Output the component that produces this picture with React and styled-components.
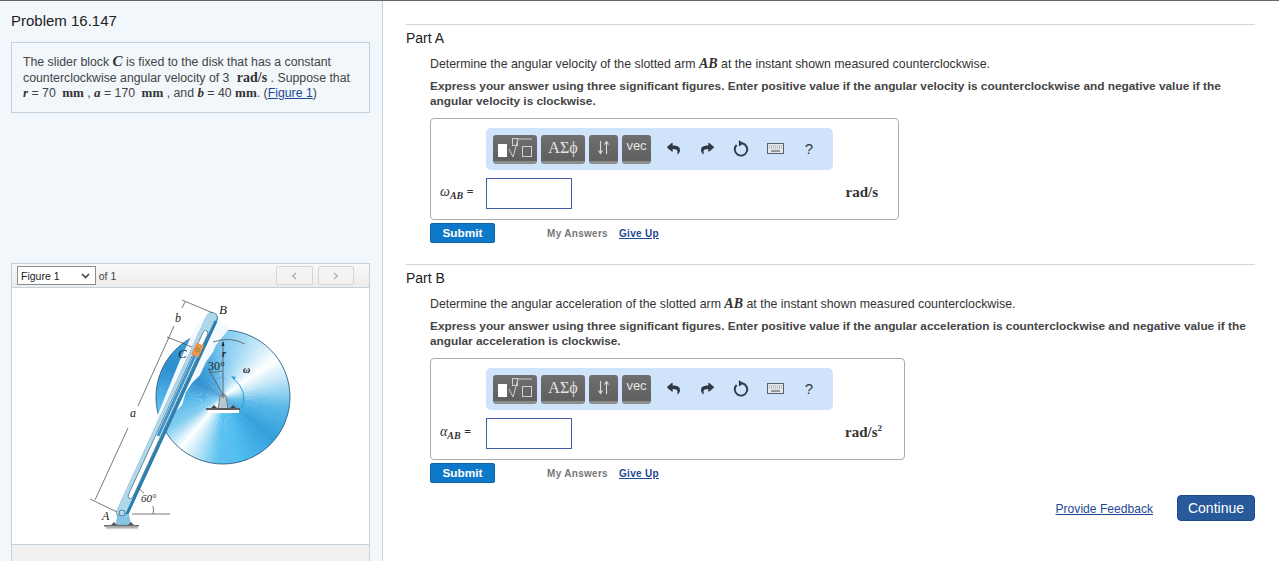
import React from 'react';
import styled, { createGlobalStyle } from 'styled-components';
import { FaReply, FaShare } from 'react-icons/fa';

const GlobalStyle = createGlobalStyle`
  html, body {
    margin: 0;
    padding: 0;
    background: #fff;
    overflow: hidden;
  }
  body {
    font-family: "Liberation Sans", Arial, sans-serif;
    color: #333;
  }
`;

const Page = styled.div`
  display: flex;
  width: 1279px;
  height: 561px;
  border-top: 1px solid #666;
  box-sizing: border-box;
  overflow: hidden;
`;

const Sidebar = styled.aside`
  width: 383px;
  flex: none;
  box-sizing: border-box;
  background: #f2f7fc;
  border-right: 1px solid #c3d1dd;
  padding: 11px 12px 0 11px;
`;

const Title = styled.h1`
  margin: 0 0 13px;
  font-size: 15px;
  line-height: 17px;
  font-weight: 400;
  color: #222;
`;

const Intro = styled.div`
  height: 71px;
  box-sizing: border-box;
  border: 1px solid #c3d1dd;
  padding: 11px 11px 0;
  font-size: 12.3px;
  line-height: 15.5px;
  color: #444;
  white-space: nowrap;
`;

const Formula = styled.span`
  font-family: "Liberation Serif", serif;
  font-weight: 700;
  font-size: ${(p) => p.$size || 14}px;
  font-style: ${(p) => (p.$italic ? 'italic' : 'normal')};
  line-height: 1;
  color: #333;
  margin: ${(p) => p.$margin || '0'};
`;

const TextLink = styled.a`
  color: #1d4a94;
  text-decoration: underline;
`;

const FigurePanel = styled.section`
  margin-top: 150px;
  border: 1px solid #c3d1dd;
  background: #fff;
`;

const FigureBar = styled.div`
  display: flex;
  align-items: center;
  height: 23px;
  padding: 0 15px 0 5px;
  background: linear-gradient(#f9f9f9, #ececec);
  border-bottom: 1px solid #c3d1dd;
  font-size: 10.5px;
  color: #444;
  white-space: nowrap;
`;

const FigureSelect = styled.div`
  display: flex;
  align-items: center;
  justify-content: space-between;
  width: 80px;
  height: 19px;
  box-sizing: border-box;
  margin-right: 3px;
  padding: 0 5px 0 3px;
  background: #fff;
  border: 1px solid #8d8d8d;
  color: #222;
`;

const PagerButton = styled.div`
  display: flex;
  align-items: center;
  justify-content: center;
  width: 35px;
  height: 17px;
  margin-left: ${(p) => p.$margin}px;
  border: 1px solid #d5d5d5;
  border-radius: 2px;
  background: #f3f3f3;
`;

const FigureBody = styled.div`
  height: 256px;
`;

const FigureFoot = styled.div`
  height: 20px;
  border-top: 1px solid #c3d1dd;
  background: #f1f1f1;
`;

const Main = styled.main`
  flex: 1;
  min-width: 0;
  box-sizing: border-box;
  padding: 23px 24px 0 23px;
`;

const Part = styled.section`
  border-top: 1px solid #d6d6d6;
  padding-top: 6px;
  height: 240px;
  box-sizing: border-box;
`;

const PartTitle = styled.h2`
  margin: 0 0 11px;
  font-size: 14px;
  line-height: 15px;
  font-weight: 400;
  color: #222;
`;

const PartBody = styled.div`
  padding-left: 24px;
`;

const Question = styled.p`
  margin: 0 0 7px;
  font-size: 12.35px;
  line-height: 15px;
  color: #333;
`;

const Instruction = styled.p`
  margin: 0 0 9px;
  font-size: 11.83px;
  line-height: 15px;
  font-weight: 700;
  color: #444;
`;

const AnswerBox = styled.div`
  width: ${(p) => p.$width}px;
  height: 102px;
  box-sizing: border-box;
  border: 1px solid #aaa;
  border-radius: 4px;
  padding: 9px ${(p) => p.$inset}px 0 9px;
`;

const Toolbar = styled.div`
  display: flex;
  align-items: center;
  width: 347px;
  height: 42px;
  box-sizing: border-box;
  margin-left: 46px;
  padding: 0 7px;
  background: #cfe4fb;
  border-radius: 5px;
`;

const ToolGroup = styled.div`
  display: flex;
  gap: 4px;
  margin-right: ${(p) => p.$margin || 0}px;
`;

const ToolButton = styled.div`
  display: flex;
  align-items: ${(p) => (p.$top ? 'flex-start' : 'center')};
  justify-content: center;
  width: ${(p) => p.$width}px;
  height: 29px;
  box-sizing: border-box;
  padding-top: ${(p) => (p.$top ? 3 : 0)}px;
  border-radius: 3px;
  background: linear-gradient(#6f6f6f, #5f5f5f);
  border-bottom: 3px solid #8d8d8d;
  color: #e4e4e4;
  font-size: 13px;
`;

const GreekLabel = styled.span`
  font-family: "Liberation Serif", serif;
  font-size: 16px;
`;

const ActionIcon = styled.div`
  display: flex;
  align-items: center;
  justify-content: center;
  width: 34px;
  padding-bottom: 2px;
  color: #2f3a44;
  font-size: 15px;
`;

const InputRow = styled.div`
  display: flex;
  align-items: center;
  height: 31px;
  margin-top: 8px;
`;

const InputLabel = styled.label`
  width: 46px;
  padding-bottom: 2px;
  font-family: "Liberation Serif", serif;
  font-style: italic;
  font-size: 14px;
  color: #333;
  white-space: nowrap;
`;

const SubLabel = styled.sub`
  font-size: 10px;
  font-weight: 700;
  vertical-align: -3px;
`;

const AnswerInput = styled.div`
  width: 86px;
  height: 31px;
  box-sizing: border-box;
  border: 1px solid #3f5fa8;
  background: #fff;
`;

const Unit = styled.span`
  margin-left: auto;
  padding-bottom: 2px;
  font-family: "Liberation Serif", serif;
  font-weight: 700;
  font-size: 15px;
  color: #333;
`;

const UnitPower = styled.sup`
  font-size: 9px;
  line-height: 0;
`;

const ActionRow = styled.div`
  display: flex;
  align-items: center;
  margin-top: 3px;
`;

const SubmitButton = styled.button`
  width: 65px;
  height: 20px;
  padding: 0;
  border: 1px solid #0e65a8;
  border-radius: 2px;
  background: #0f79c9;
  color: #fff;
  font-family: inherit;
  font-size: 11.8px;
  font-weight: 700;
`;

const MyAnswers = styled.span`
  margin-left: 52px;
  font-size: 10px;
  font-weight: 700;
  letter-spacing: 0.3px;
  color: #777;
`;

const GiveUp = styled.a`
  margin-left: 11px;
  font-size: 10px;
  font-weight: 700;
  letter-spacing: 0.3px;
  color: #1d4a94;
  text-decoration: underline;
`;

const Footer = styled.div`
  display: flex;
  align-items: center;
  justify-content: flex-end;
  margin-top: -9px;
`;

const Feedback = styled.a`
  margin: 2px 24px 0 0;
  font-size: 12.1px;
  color: #1d4a94;
  text-decoration: underline;
`;

const ContinueButton = styled.button`
  width: 78px;
  height: 26px;
  padding: 0;
  border: 1px solid #1f4c86;
  border-radius: 4px;
  background: #28599b;
  color: #fff;
  font-family: inherit;
  font-size: 14px;
`;

const DiagramText = styled.text`
  font-family: "Liberation Serif", serif;
  font-style: ${(p) => (p.$plain ? 'normal' : 'italic')};
  font-weight: ${(p) => (p.$bold ? 700 : 400)};
  font-size: ${(p) => p.$size || 12}px;
  fill: #222;
`;

// stops of the disk shading, clockwise from the top
const diskStops = [
  [0, [125, 200, 240]],
  [25, [175, 222, 246]],
  [55, [255, 255, 255]],
  [75, [190, 228, 247]],
  [100, [90, 185, 232]],
  [130, [50, 160, 220]],
  [165, [80, 190, 240]],
  [185, [95, 195, 240]],
  [205, [190, 230, 248]],
  [220, [255, 255, 255]],
  [240, [130, 205, 240]],
  [265, [85, 185, 235]],
  [300, [45, 140, 205]],
  [330, [60, 160, 220]],
  [360, [125, 200, 240]]
];

const shadeAt = (deg) => {
  let i = 0;
  while (i < diskStops.length - 2 && diskStops[i + 1][0] <= deg) i += 1;
  const [a, ca] = diskStops[i];
  const [b, cb] = diskStops[i + 1];
  const t = (deg - a) / (b - a);
  const c = ca.map((v, k) => Math.round(v + (cb[k] - v) * t));
  return `rgb(${c[0]},${c[1]},${c[2]})`;
};

const CX = 223;
const CY = 397;
const R = 67;

const wedges = [...Array(120).keys()].map((i) => {
  const from = ((i * 3 - 0.3 - 90) * Math.PI) / 180;
  const to = (((i + 1) * 3 + 0.3 - 90) * Math.PI) / 180;
  const x1 = CX + R * Math.cos(from);
  const y1 = CY + R * Math.sin(from);
  const x2 = CX + R * Math.cos(to);
  const y2 = CY + R * Math.sin(to);
  return {
    d: `M${CX} ${CY}L${x1.toFixed(2)} ${y1.toFixed(2)}A${R} ${R} 0 0 1 ${x2.toFixed(2)} ${y2.toFixed(2)}Z`,
    fill: shadeAt(i * 3 + 1.5)
  };
});

const SliderDiagram = () => (
  <svg width="357" height="256" viewBox="12 288 357 256">
    <defs>
      <filter id="soft" x="-20%" y="-20%" width="140%" height="140%">
        <feGaussianBlur stdDeviation="0.5" />
      </filter>
      <linearGradient id="fade" x1="0" y1="0" x2="0" y2="1">
        <stop offset="0" stopColor="#9a9a9a" />
        <stop offset="1" stopColor="#f2f2f2" />
      </linearGradient>
    </defs>

    <g filter="url(#soft)">
      {wedges.map((w) => (
        <path key={w.d} d={w.d} fill={w.fill} />
      ))}
    </g>
    <circle cx={CX} cy={CY} r={R} fill="none" stroke="#33607e" strokeWidth="0.9" />

    {/* torn cut-away along the arm */}
    <path
      d="M212 314L229 329L224 335L216 345L213 352L206 362L200 375L192 383L186 392L182 405L175 412L168 422L163 432L150 434L180 360L198 322Z"
      fill="#f3f9fd"
      filter="url(#soft)"
    />

    {/* arm */}
    <path d="M122 513L212 318" stroke="#4d8fb2" strokeWidth="12" strokeLinecap="round" />
    <path d="M121.5 512.5L211.5 317.5" stroke="#aed7ec" strokeWidth="10.6" strokeLinecap="round" />
    <path d="M126.5 515L216 321" stroke="#2a7fb0" strokeWidth="3" />
    <path d="M130.5 496L205.5 333" stroke="#35607a" strokeWidth="5.4" strokeLinecap="round" />
    <path d="M130.5 496L205.5 333" stroke="#fff" strokeWidth="4.2" strokeLinecap="round" />
    <path d="M158 436L197 351" stroke="#3a97cf" strokeWidth="3" />

    {/* slider block */}
    <rect x="193.5" y="343.5" width="8" height="13" fill="#e9974c" transform="rotate(25 197.5 350)" />
    <circle cx="197.5" cy="350" r="1.8" fill="none" stroke="#9a6a3c" strokeWidth="0.7" />

    {/* pin A and base */}
    <path d="M118 514L128 514L131 525L116 525Z" fill="#86c5e6" stroke="#5a94b2" strokeWidth="0.5" />
    <circle cx="122" cy="513" r="3" fill="#b5d8e9" stroke="#3f6f88" strokeWidth="0.8" />
    <rect x="104" y="525" width="35" height="1.6" fill="#6f6f6f" />
    <rect x="106" y="526.6" width="32" height="3" fill="url(#fade)" />
    <path d="M111 525l3-3l3 3zM128 525l3-3l3 3z" fill="#555" />

    {/* disk mount */}
    <path d="M218 409L220 396Q223 391 226 396L228 409Z" fill="#b9c7cf" stroke="#4c5a62" strokeWidth="0.7" />
    <circle cx="223" cy="396" r="1.4" fill="none" stroke="#4c5a62" strokeWidth="0.6" />
    <rect x="206" y="408" width="34" height="2" fill="#5a5a5a" />
    <rect x="208" y="410" width="31" height="3" fill="#fff" />
    <path d="M211 408l3-3l3 3zM230 408l3-3l3 3z" fill="#444" />

    {/* dimension lines */}
    <g stroke="#555" strokeWidth="0.8" fill="none">
      <path d="M95 500L128 428M138 406L170 335M170 335L174 326M182 308L185 302" />
      <path d="M90 499L117 512M167 337L192 347M182 300L213 313" />
      <path d="M223 397L223 342M222 393L209 370" />
      <path d="M213 342Q230 336 245 344" />
      <path d="M132 514L170 514M137 487L144 493" />
      <path d="M209 372Q215 373 222 371M153 506Q154 510 153 514" />
    </g>
    <path d="M233 378Q249 392 242 408" fill="none" stroke="#2aa0d6" strokeWidth="1" />
    <path d="M231 376l5 1l-2 3z" fill="#2aa0d6" />
    <path d="M223 341l-1.5 5l3 0z" fill="#222" />

    <DiagramText x="219" y="314" $size={13}>B</DiagramText>
    <DiagramText x="175" y="322" $size={12}>b</DiagramText>
    <DiagramText x="130" y="417" $size={12}>a</DiagramText>
    <DiagramText x="178" y="358" $size={13}>C</DiagramText>
    <DiagramText x="222" y="357" $size={10} $bold>r</DiagramText>
    <DiagramText x="208" y="370" $size={12} $plain>30°</DiagramText>
    <DiagramText x="243" y="373" $size={10} $bold>ω</DiagramText>
    <DiagramText x="141" y="502" $size={11}>60°</DiagramText>
    <DiagramText x="102" y="520" $size={12}>A</DiagramText>
  </svg>
);

const TemplateIcon = () => (
  <svg width="40" height="24" viewBox="0 0 40 24">
    <rect x="3" y="8" width="9" height="13" fill="#fff" />
    <g fill="none" stroke="#cfcfcf" strokeWidth="1">
      <rect x="17.5" y="2.5" width="5" height="7" />
      <path d="M14 13l4 8l5-18h14" />
      <rect x="27.5" y="10.5" width="9" height="10" />
    </g>
  </svg>
);

const ArrowsIcon = () => (
  <svg width="13" height="15" viewBox="0 0 13 15" fill="none" stroke="#dcdcdc" strokeWidth="1.1">
    <path d="M3.5 1v12M1.5 10.5L3.5 13.5L5.5 10.5M9.5 14V2M7.5 4.5L9.5 1.5L11.5 4.5" />
  </svg>
);

const ResetIcon = () => (
  <svg width="16" height="17" viewBox="0 0 16 17" fill="none">
    <path d="M9.2 3.3A6.2 6.2 0 1 1 3.6 5" stroke="#2f3a44" strokeWidth="1.9" />
    <path d="M5.8 0.2L10.8 3.2L6 6.6Z" fill="#2f3a44" />
  </svg>
);

const KeyboardIcon = () => (
  <svg width="17" height="11" viewBox="0 0 17 11">
    <rect x="0.5" y="0.5" width="16" height="10" fill="#e6e9ec" stroke="#56606a" />
    <path d="M2 3h13M2 5h13" stroke="#8a939b" strokeWidth="1" strokeDasharray="1 1" />
    <path d="M4 8h9" stroke="#6c757d" strokeWidth="1.4" />
  </svg>
);

const AnswerPart = ({ title, quantity, symbol, width, inset, unit }) => (
  <Part>
    <PartTitle>{title}</PartTitle>
    <PartBody>
      <Question>
        {`Determine the angular ${quantity} of the slotted arm `}
        <Formula $italic>AB</Formula>
        {' at the instant shown measured counterclockwise.'}
      </Question>
      <Instruction>
        {`Express your answer using three significant figures. Enter positive value if the angular ${quantity} is counterclockwise and negative value if the angular ${quantity} is clockwise.`}
      </Instruction>
      <AnswerBox $width={width} $inset={inset}>
        <Toolbar>
          <ToolGroup $margin={5}>
            <ToolButton $width={44}>
              <TemplateIcon />
            </ToolButton>
            <ToolButton $width={44}>
              <GreekLabel>ΑΣϕ</GreekLabel>
            </ToolButton>
            <ToolButton $width={29}>
              <ArrowsIcon />
            </ToolButton>
            <ToolButton $width={29} $top>
              vec
            </ToolButton>
          </ToolGroup>
          <ActionIcon>
            <FaReply size={13} />
          </ActionIcon>
          <ActionIcon>
            <FaShare size={13} />
          </ActionIcon>
          <ActionIcon>
            <ResetIcon />
          </ActionIcon>
          <ActionIcon>
            <KeyboardIcon />
          </ActionIcon>
          <ActionIcon>?</ActionIcon>
        </Toolbar>
        <InputRow>
          <InputLabel>
            {symbol}
            <SubLabel>AB</SubLabel> <Formula $size={12}>=</Formula>
          </InputLabel>
          <AnswerInput />
          <Unit>{unit}</Unit>
        </InputRow>
      </AnswerBox>
      <ActionRow>
        <SubmitButton>Submit</SubmitButton>
        <MyAnswers>My Answers</MyAnswers>
        <GiveUp>Give Up</GiveUp>
      </ActionRow>
    </PartBody>
  </Part>
);

const App = () => (
  <>
    <GlobalStyle />
    <Page>
      <Sidebar>
        <Title>Problem 16.147</Title>
        <Intro>
          The slider block <Formula $italic $size={15}>C</Formula> is fixed to the disk that has a constant
          <br />
          counterclockwise angular velocity of 3 <Formula $margin="0 0 0 4px">rad/s</Formula> . Suppose that
          <br />
          <Formula $italic $size={13}>r</Formula> = 70 <Formula $size={13} $margin="0 0 0 3px">mm</Formula> ,{' '}
          <Formula $italic $size={13}>a</Formula> = 170 <Formula $size={13} $margin="0 0 0 3px">mm</Formula> , and{' '}
          <Formula $italic $size={13}>b</Formula> = 40 <Formula $size={13}>mm</Formula>. (
          <TextLink>Figure 1</TextLink>)
        </Intro>
        <FigurePanel>
          <FigureBar>
            <FigureSelect>
              Figure 1
              <svg width="9" height="6" viewBox="0 0 9 6" fill="none">
                <path d="M1 1l3.5 3.5L8 1" stroke="#444" strokeWidth="1.6" />
              </svg>
            </FigureSelect>
            of 1
            <PagerButton $margin={160}>
              <svg width="6" height="8" viewBox="0 0 6 8" fill="none">
                <path d="M5 1L1.5 4L5 7" stroke="#aaa" strokeWidth="1.2" />
              </svg>
            </PagerButton>
            <PagerButton $margin={5}>
              <svg width="6" height="8" viewBox="0 0 6 8" fill="none">
                <path d="M1 1L4.5 4L1 7" stroke="#aaa" strokeWidth="1.2" />
              </svg>
            </PagerButton>
          </FigureBar>
          <FigureBody>
            <SliderDiagram />
          </FigureBody>
          <FigureFoot />
        </FigurePanel>
      </Sidebar>
      <Main>
        <AnswerPart title="Part A" quantity="velocity" symbol="ω" width={469} inset={20} unit="rad/s" />
        <AnswerPart
          title="Part B"
          quantity="acceleration"
          symbol="α"
          width={475}
          inset={22}
          unit={
            <>
              rad/s<UnitPower>2</UnitPower>
            </>
          }
        />
        <Footer>
          <Feedback>Provide Feedback</Feedback>
          <ContinueButton>Continue</ContinueButton>
        </Footer>
      </Main>
    </Page>
  </>
);

export default App;
